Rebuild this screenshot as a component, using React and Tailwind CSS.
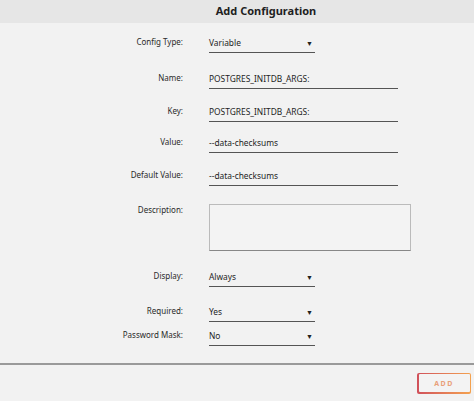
import React from 'react';

const font = { fontFamily: '"Noto Sans", "Open Sans", sans-serif' };

const Caret = () => (
  <span className="text-[7px] leading-none text-[#222]">▼</span>
);

const Row = ({ label, children, className = '' }) => (
  <div className={`grid grid-cols-[183px_1fr] gap-x-[26px] items-end ${className}`}>
    <div className="text-right text-[8px] text-[#2a2a2a] pb-[5px]">{label}</div>
    <div>{children}</div>
  </div>
);

const TextField = ({ value }) => (
  <div className="w-[189px] h-[19px] border-b border-[#555] flex items-center text-[8.4px] text-[#1e1e1e]">
    {value}
  </div>
);

const SelectField = ({ value }) => (
  <div className="w-[106px] h-[19px] border-b border-[#555] flex items-center justify-between pr-[2px] text-[8.4px] text-[#1e1e1e]">
    <span>{value}</span>
    <Caret />
  </div>
);

export default function App() {
  return (
    <div className="w-[474px] h-[401px] bg-[#f2f2f2] flex flex-col overflow-hidden" style={font}>
      <div className="h-[23px] bg-[#e6e6e6] flex items-center justify-center pl-[58px] shrink-0">
        <h1 className="text-[11px] font-bold text-[#1e1e1e]">Add Configuration</h1>
      </div>

      <div className="flex flex-col pt-[11px]">
        <Row label="Config Type:"><SelectField value="Variable" /></Row>
        <Row label="Name:" className="mt-[17px]"><TextField value="POSTGRES_INITDB_ARGS:" /></Row>
        <Row label="Key:" className="mt-[14px]"><TextField value="POSTGRES_INITDB_ARGS:" /></Row>
        <Row label="Value:" className="mt-[12px]"><TextField value="--data-checksums" /></Row>
        <Row label="Default Value:" className="mt-[14px]"><TextField value="--data-checksums" /></Row>

        <div className="grid grid-cols-[183px_1fr] gap-x-[26px] mt-[18px]">
          <div className="text-right text-[8px] text-[#2a2a2a]">Description:</div>
          <div className="w-[202px] h-[47px] border border-[#bbb] border-b-[#888] bg-[#f3f3f3]" />
        </div>

        <Row label="Display:" className="mt-[17px]"><SelectField value="Always" /></Row>
        <Row label="Required:" className="mt-[16px]"><SelectField value="Yes" /></Row>
        <Row label="Password Mask:" className="mt-[5px]"><SelectField value="No" /></Row>
      </div>

      <div className="mt-auto h-[2px] bg-[#9a9a9a] shrink-0" />
      <div className="h-[36px] flex items-center justify-end pr-[3px] shrink-0">
        <div className="flex p-[1.5px] rounded-[2px] bg-gradient-to-r from-[#d0505a] to-[#f4a24e]">
          <button className="block w-[51px] h-[18px] rounded-[1px] bg-[#f3f3f3] text-[7px] leading-none font-bold tracking-[1.5px] text-[#e9a079]">
            ADD
          </button>
        </div>
      </div>
    </div>
  );
}
